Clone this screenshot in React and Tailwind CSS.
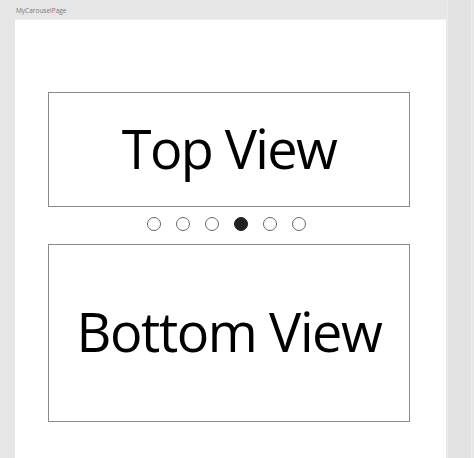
export default function App() {
  const dots = [0, 1, 2, 3, 4, 5];
  return (
    <div className="w-[474px] h-[458px] bg-[#e6e6e6] relative overflow-hidden" style={{ fontFamily: '"Open Sans", "Noto Sans", sans-serif' }}>
      <div className="h-[19px] pl-[16px] pt-[7px] text-[6.5px] leading-[8px] text-[#7a7a7a]">MyCarouselPage</div>
      <div className="ml-[15px] w-[431px] h-[439px] bg-white border-t border-[#f0f0f0] pt-[72px] pl-[33px]">
        <div className="w-[362px] h-[115px] border border-[#8a8a8a] flex items-center justify-center">
          <span className="text-[54px] leading-none text-black tracking-[-1.6px] -mt-[4px]">Top View</span>
        </div>
        <div className="h-[37px] flex items-start pt-[10px] pl-[99px] gap-[15px]">
          {dots.map((i) => (
            <div
              key={i}
              className={i === 3 ? "w-[14px] h-[14px] rounded-full bg-[#222] border border-[#222]" : "w-[14px] h-[14px] rounded-full border border-[#666] bg-white"}
            />
          ))}
        </div>
        <div className="w-[362px] h-[178px] border border-[#8a8a8a] flex items-center justify-center">
          <span className="text-[54px] leading-none text-black tracking-[-1.4px] -mt-[4px]">Bottom View</span>
        </div>
      </div>
      <div className="absolute left-[447px] top-0 w-[25px] h-full bg-[#e3e3e3] border-l border-r border-[#ececec]" />
    </div>
  );
}
